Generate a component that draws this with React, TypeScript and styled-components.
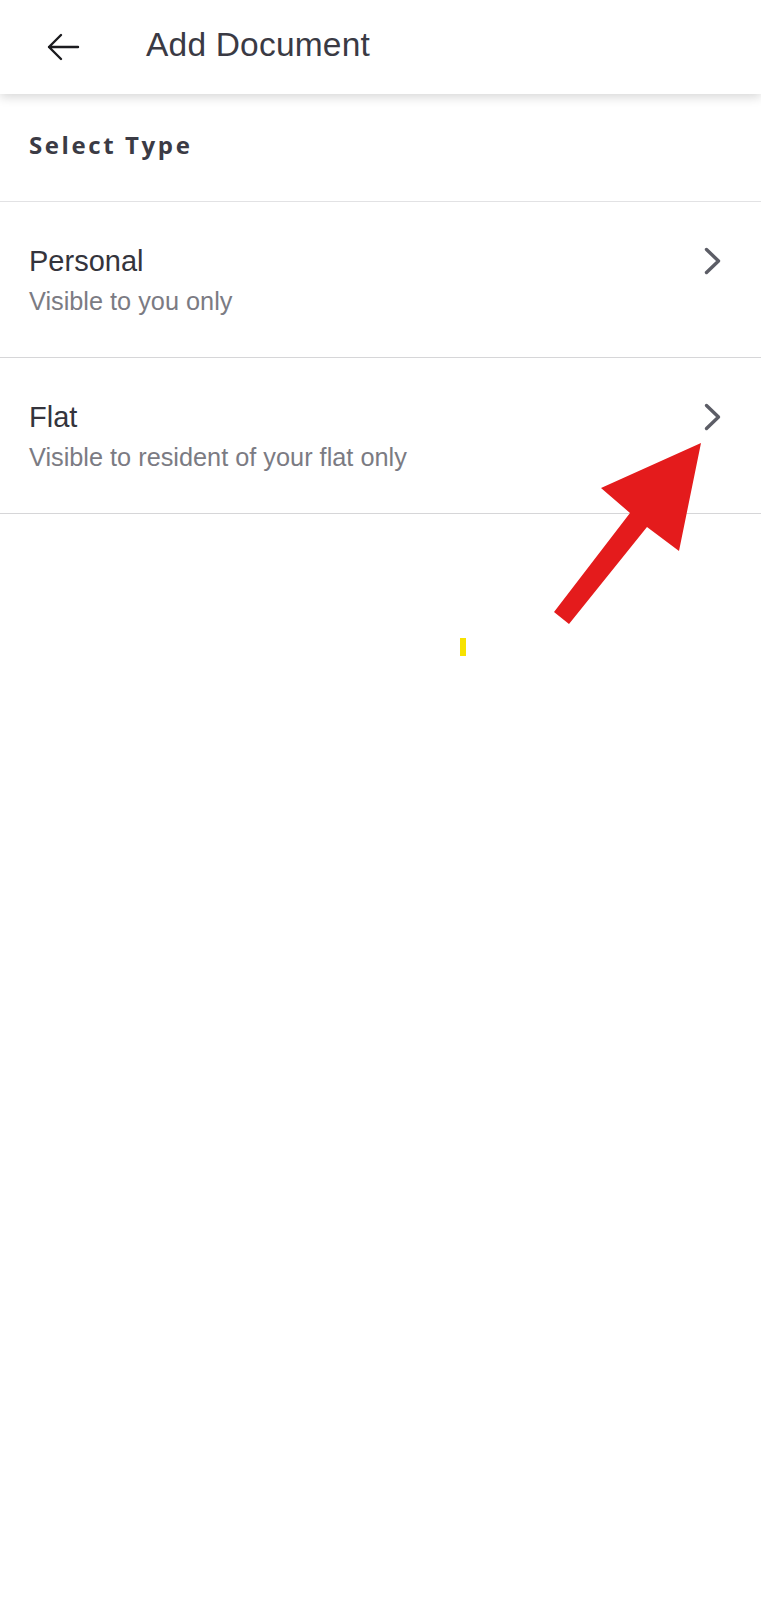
import React from "react";
import styled, { createGlobalStyle } from "styled-components";

const Global = createGlobalStyle`
  html, body { margin: 0; padding: 0; background: #ffffff; }
  body { font-family: "Liberation Sans", Arial, sans-serif; }
  * { box-sizing: border-box; }
`;

const Page = styled.div`
  position: relative;
  width: 761px;
  min-height: 1600px;
  background: #fff;
`;

const Header = styled.header`
  position: relative;
  z-index: 1;
  height: 94px;
  display: flex;
  align-items: center;
  background: #fff;
  box-shadow: 0 3px 10px rgba(0, 0, 0, 0.16);
`;

const BackButton = styled.button`
  width: 64px;
  height: 64px;
  margin-left: 31px;
  padding: 0;
  border: none;
  background: transparent;
  display: flex;
  align-items: center;
  justify-content: center;
  color: #1b1b1f;
`;

const Title = styled.h1`
  margin: -4px 0 0 51px;
  font-family: "Liberation Sans", Arial, sans-serif;
  font-weight: 400;
  font-size: 33.5px;
  color: #3a3a44;
  letter-spacing: 0.2px;
`;

const SectionHead = styled.div`
  height: 108px;
  display: flex;
  align-items: center;
  padding: 0 29px 6px;
  border-bottom: 1px solid #e2e2e4;
  font-family: "Open Sans", sans-serif;
  font-weight: 700;
  font-size: 24px;
  letter-spacing: 2.6px;
  color: #3b3b45;
`;

const Row = styled.div`
  height: 156px;
  display: flex;
  align-items: center;
  padding: 0 39px 0 29px;
  border-bottom: 1px solid #d6d6d8;
`;

const RowText = styled.div`
  flex: 1;
  display: flex;
  flex-direction: column;
  gap: 9px;
  margin-top: 2px;
`;

const RowTitle = styled.div`
  font-size: 29px;
  color: #34343c;
`;

const RowSub = styled.div`
  font-size: 25.3px;
  color: #7b7b83;
`;

const Chevron = styled.svg`
  width: 19px;
  height: 28px;
  margin-top: -38px;
`;

const Overlay = styled.svg`
  position: absolute;
  left: 0;
  top: 0;
  pointer-events: none;
`;

const Rows = [
  { title: "Personal", sub: "Visible to you only" },
  { title: "Flat", sub: "Visible to resident of your flat only" },
];

export default function App() {
  return (
    <Page>
      <Global />
      <Header>
        <BackButton aria-label="back">
          <svg width="34" height="28" viewBox="0 0 34 28" fill="none">
            <path
              d="M32 14H3M15 2L3 14l12 12"
              stroke="#1b1b1f"
              strokeWidth="2.4"
              strokeLinecap="round"
              strokeLinejoin="round"
            />
          </svg>
        </BackButton>
        <Title>Add Document</Title>
      </Header>
      <SectionHead>Select Type</SectionHead>
      {Rows.map((r) => (
        <Row key={r.title}>
          <RowText>
            <RowTitle>{r.title}</RowTitle>
            <RowSub>{r.sub}</RowSub>
          </RowText>
          <Chevron viewBox="0 0 19 28" fill="none">
            <path
              d="M3.5 2.5l12 11.5-12 11.5"
              stroke="#5c5d66"
              strokeWidth="3.4"
              strokeLinecap="round"
              strokeLinejoin="round"
            />
          </Chevron>
        </Row>
      ))}
      <Overlay width="761" height="700" viewBox="0 0 761 700">
        <polygon
          points="701,443 679,551 647,527 569,624 554,612 630,513 601,488"
          fill="#e41b1c"
        />
        <rect x="460" y="638" width="6" height="18" fill="#f7e200" />
      </Overlay>
    </Page>
  );
}
